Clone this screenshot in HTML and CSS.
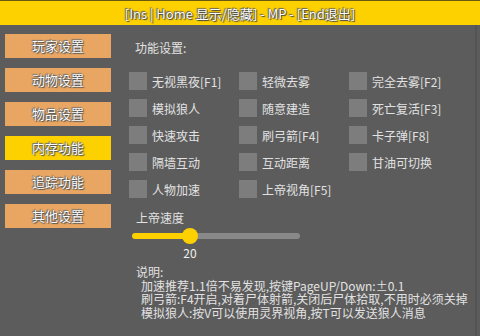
FILE: index.html
```html
<!DOCTYPE html>
<html lang="zh-CN">
<head>
    <meta charset="UTF-8">
    <title>MP</title>
    <link rel="stylesheet" href="styles.css">
</head>
<body>
    <div class="title-bar">[Ins | Home 显示/隐藏] - MP - [End退出]</div>

    <div class="main">
        <div class="sidebar">
            <div class="tab">玩家设置</div>
            <div class="tab">动物设置</div>
            <div class="tab">物品设置</div>
            <div class="tab active">内存功能</div>
            <div class="tab">追踪功能</div>
            <div class="tab">其他设置</div>
        </div>

        <div class="panel">
            <div class="section-title">功能设置:</div>

            <div class="check-grid">
                <div class="check"><span class="box"></span>无视黑夜[F1]</div>
                <div class="check"><span class="box"></span>轻微去雾</div>
                <div class="check"><span class="box"></span>完全去雾[F2]</div>
                <div class="check"><span class="box"></span>模拟狼人</div>
                <div class="check"><span class="box"></span>随意建造</div>
                <div class="check"><span class="box"></span>死亡复活[F3]</div>
                <div class="check"><span class="box"></span>快速攻击</div>
                <div class="check"><span class="box"></span>刷弓箭[F4]</div>
                <div class="check"><span class="box"></span>卡子弹[F8]</div>
                <div class="check"><span class="box"></span>隔墙互动</div>
                <div class="check"><span class="box"></span>互动距离</div>
                <div class="check"><span class="box"></span>甘油可切换</div>
                <div class="check"><span class="box"></span>人物加速</div>
                <div class="check"><span class="box"></span>上帝视角[F5]</div>
            </div>

            <div class="slider-label">上帝速度</div>
            <div class="slider">
                <div class="slider-fill" style="width: 58px;"></div>
                <div class="slider-thumb"></div>
                <div class="slider-rest"></div>
            </div>
            <div class="slider-value">20</div>

            <div class="notes">
                <div class="notes-title">说明:</div>
                <div class="note">加速推荐1.1倍不易发现,按键PageUP/Down:±0.1</div>
                <div class="note">刷弓箭:F4开启,对着尸体射箭,关闭后尸体拾取,不用时必须关掉</div>
                <div class="note">模拟狼人:按V可以使用灵界视角,按T可以发送狼人消息</div>
            </div>
        </div>
    </div>
</body>
</html>
```

FILE: styles.css
```css
body {
    margin: 0;
    width: 480px;
    height: 336px;
    overflow: hidden;
    background: #5c5c5c;
    font-family: "Noto Sans CJK SC", "DejaVu Sans", sans-serif;
    color: #e2e2e2;
    font-size: 12px;
}
.title-bar {
    height: 25px;
    line-height: 25px;
    background: #fdd000;
    border-top: 1px solid #6a5a10;
    box-sizing: border-box;
    text-align: center;
    color: #fff;
    font-size: 13px;
    text-shadow: 0 0 1px #333, 1px 1px 1px #444, -1px -1px 1px #666;
}
.main {
    display: flex;
    border-right: 2px solid #545454;
    margin-right: 3px;
    height: 311px;
}
.sidebar {
    display: flex;
    flex-direction: column;
    gap: 10px;
    padding: 9px 0 0 5px;
    width: 106px;
}
.tab {
    height: 24px;
    line-height: 24px;
    background: #e9a662;
    text-align: center;
    color: #fff;
    font-size: 13px;
    text-shadow: 0 0 1px #333, 1px 1px 1px #555, -1px -1px 1px #777;
}
.tab.active {
    background: #fdd000;
}
.panel {
    margin-left: 18px;
    padding-top: 15px;
    flex: 1;
}
.section-title {
    line-height: 16px;
    padding-left: 6px;
}
.check-grid {
    display: grid;
    grid-template-columns: 110px 110px 110px;
    row-gap: 9px;
    margin-top: 16px;
}
.check {
    display: flex;
    align-items: center;
    height: 18px;
    white-space: nowrap;
}
.box {
    width: 18px;
    height: 18px;
    background: #7d7d7d;
    margin-right: 5px;
    flex-shrink: 0;
}
.slider-label {
    margin-top: 12px;
    padding-left: 7px;
    line-height: 16px;
}
.slider {
    display: flex;
    align-items: center;
    width: 168px;
    height: 16px;
    margin: 2px 0 0 3px;
}
.slider-fill {
    height: 6px;
    background: #fdd000;
    border-radius: 3px 0 0 3px;
}
.slider-thumb {
    width: 16px;
    height: 16px;
    border-radius: 50%;
    background: #fdd000;
    margin: 0 -8px;
    z-index: 1;
}
.slider-rest {
    flex: 1;
    height: 6px;
    background: #898989;
    border-radius: 0 3px 3px 0;
}
.slider-value {
    margin: 2px 0 0 53px;
    width: 16px;
    text-align: center;
    line-height: 14px;
    color: #f0f0f0;
}
.notes {
    margin-top: 5px;
    line-height: 13.5px;
}
.notes-title {
    padding-left: 7px;
}
.note {
    padding-left: 12px;
    white-space: nowrap;
}
```
